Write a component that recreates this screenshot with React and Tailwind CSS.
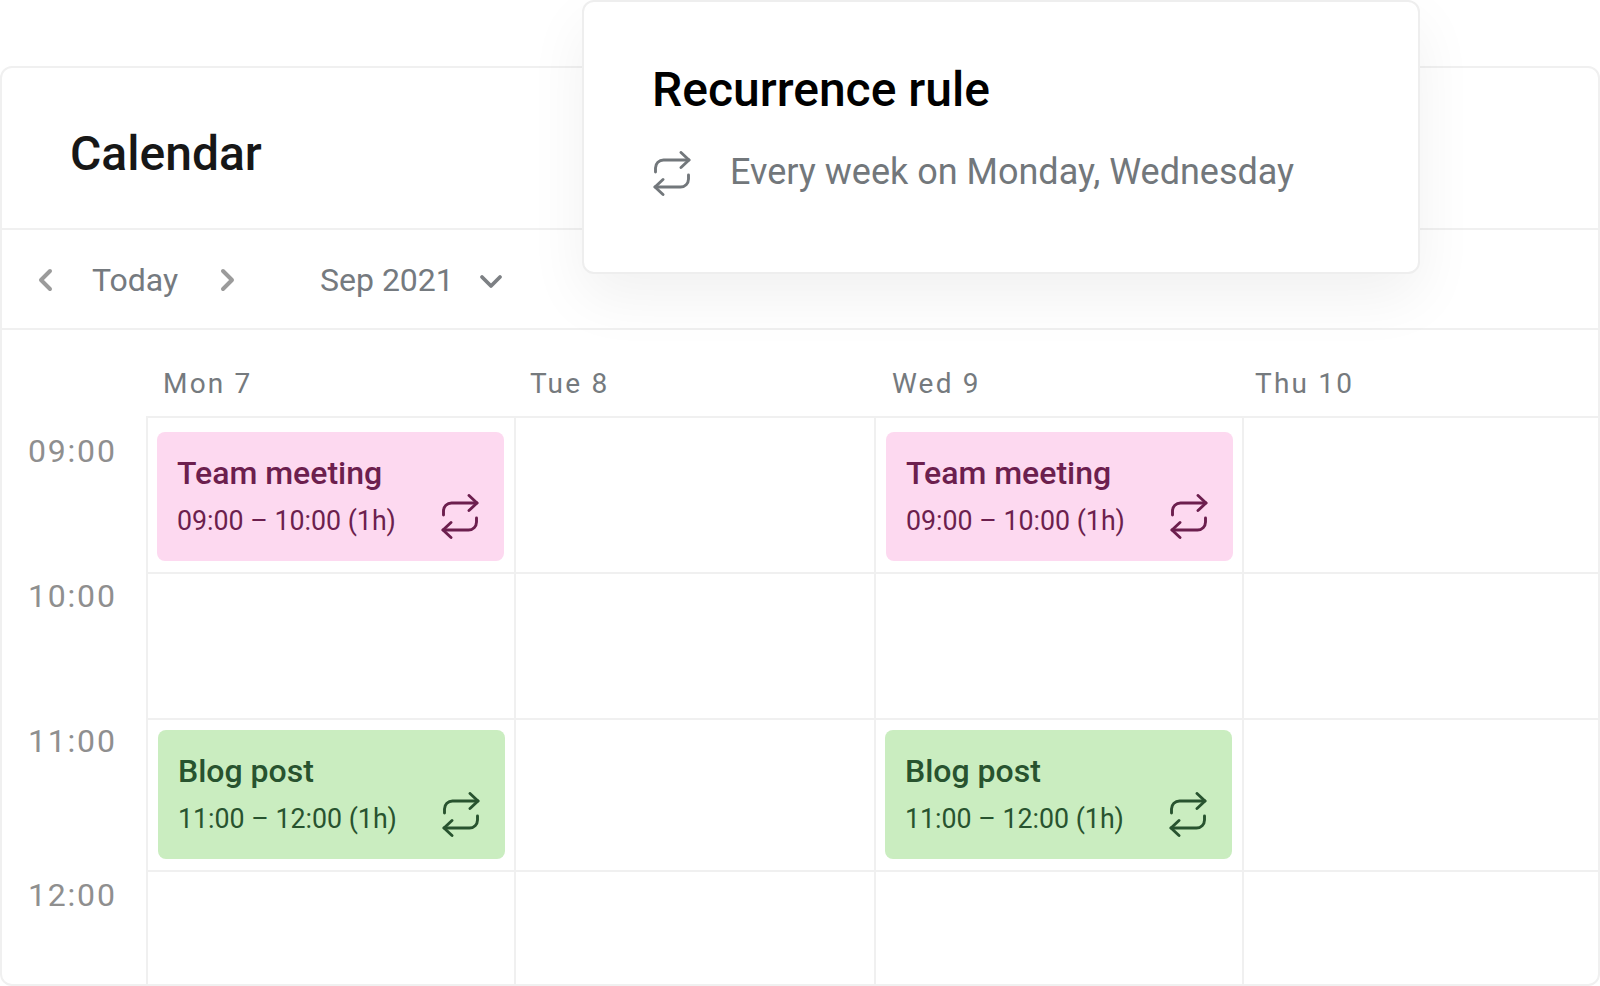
const ROBOTO = "font-['Roboto',sans-serif]";

function RepeatIcon({ className }) {
  return (
    <svg viewBox="0 0 38 46" width="38" height="46" fill="none" stroke="currentColor" strokeWidth="2.9" strokeLinecap="round" strokeLinejoin="round" className={className}>
      <path d="M28 1.5l8 7.5-8 7.5" />
      <path d="M2.5 21v-4a8 8 0 0 1 8-8H36" />
      <path d="M10 28.500l-8 7.500 8 7.500" />
      <path d="M35.500 24v4a8 8 0 0 1-8 8H2" />
    </svg>
  );
}

function EventCard({ title, time, tone, offset }) {
  const tones = {
    pink: "bg-[#fdd9f0] text-[#6c1f4e]",
    green: "bg-[#caedc0] text-[#28532f]",
  };
  return (
    <div className={`flex h-[129px] w-[347px] items-end justify-between rounded-[8px] pb-[21px] pl-[20px] pr-[25px] ${tones[tone]} ${offset}`}>
      <div className="mb-[2px] flex flex-col">
        <span className="text-[32px] leading-[40px] font-medium">{title}</span>
        <span className="mt-[11px] text-[26.75px] leading-[34px]">{time}</span>
      </div>
      <RepeatIcon />
    </div>
  );
}

function TimeCell({ label, pad }) {
  return (
    <div className={`pl-[26px] text-[32px] leading-[36px] tracking-[1.8px] text-[#8f8f8f] ${pad}`}>{label}</div>
  );
}

const cell = "border-l-2 border-t-2 border-[#f0f0f0]";

export default function App() {
  return (
    <div className={`relative h-[986px] w-[1600px] overflow-hidden bg-white pt-[66px] ${ROBOTO}`}>
      <div className="flex h-[920px] flex-col rounded-[12px] border-2 border-[#f0f0f0] bg-white">
        <div className="flex h-[162px] shrink-0 items-center border-b-2 border-[#f0f0f0] pl-[68px] pt-[12px]">
          <h1 className="text-[48px] leading-none font-medium text-[#171717]">Calendar</h1>
        </div>

        <div className="flex h-[100px] shrink-0 items-center border-b-2 border-[#f0f0f0] pt-[2px] text-[32px] text-[#757a7f]">
          <svg viewBox="0 0 16 24" width="16" height="24" fill="none" stroke="#9b9b9b" strokeWidth="4" strokeLinecap="round" strokeLinejoin="round" className="ml-[35px]">
            <path d="M13 3L4 12l9 9" />
          </svg>
          <span className="ml-[39px] w-[88px] leading-none">Today</span>
          <svg viewBox="0 0 16 24" width="16" height="24" fill="none" stroke="#9b9b9b" strokeWidth="4" strokeLinecap="round" strokeLinejoin="round" className="ml-[40px]">
            <path d="M3 3l9 9-9 9" />
          </svg>
          <span className="ml-[84px] w-[133px] leading-none whitespace-nowrap">Sep 2021</span>
          <svg viewBox="0 0 24 15" width="24" height="15" fill="none" stroke="#7d8084" strokeWidth="3.8" strokeLinecap="round" strokeLinejoin="round" className="ml-[26px] mt-[2px]">
            <path d="M3 3l9 9 9-9" />
          </svg>
        </div>

        <div className="grid min-h-0 flex-1 grid-cols-[144px_368px_360px_368px_1fr] grid-rows-[86px_156px_146px_152px_1fr]">
          <div />
          <div className="pl-[17px] pt-[35px] text-[28px] leading-[38px] tracking-[2.2px] text-[#757a7e]">Mon 7</div>
          <div className="pl-[16px] pt-[35px] text-[28px] leading-[38px] tracking-[2.2px] text-[#757a7e]">Tue 8</div>
          <div className="pl-[18px] pt-[35px] text-[28px] leading-[38px] tracking-[2.2px] text-[#757a7e]">Wed 9</div>
          <div className="pl-[13px] pt-[35px] text-[28px] leading-[38px] tracking-[2.2px] text-[#757a7e]">Thu 10</div>

          <TimeCell label="09:00" pad="pt-[17px]" />
          <div className={cell}><EventCard title="Team meeting" time="09:00 – 10:00 (1h)" tone="pink" offset="ml-[9px] mt-[14px]" /></div>
          <div className={cell} />
          <div className={cell}><EventCard title="Team meeting" time="09:00 – 10:00 (1h)" tone="pink" offset="ml-[10px] mt-[14px]" /></div>
          <div className={cell} />

          <TimeCell label="10:00" pad="pt-[6px]" />
          <div className={cell} />
          <div className={cell} />
          <div className={cell} />
          <div className={cell} />

          <TimeCell label="11:00" pad="pt-[5px]" />
          <div className={cell}><EventCard title="Blog post" time="11:00 – 12:00 (1h)" tone="green" offset="ml-[10px] mt-[10px]" /></div>
          <div className={cell} />
          <div className={cell}><EventCard title="Blog post" time="11:00 – 12:00 (1h)" tone="green" offset="ml-[9px] mt-[10px]" /></div>
          <div className={cell} />

          <TimeCell label="12:00" pad="pt-[7px]" />
          <div className={cell} />
          <div className={cell} />
          <div className={cell} />
          <div className={cell} />
        </div>
      </div>

      <div className="absolute left-[582px] top-0 flex h-[274px] w-[838px] flex-col rounded-[12px] border-2 border-[#eeeeee] bg-white pl-[69px] pt-[61px] shadow-[0_24px_60px_rgba(0,0,0,0.06)]">
        <h2 className="-ml-px text-[48px] leading-[54px] font-medium text-black">Recurrence rule</h2>
        <div className="mt-[32px] flex items-center text-[#72777b]">
          <RepeatIcon className="mt-[2px]" />
          <span className="ml-[39px] -translate-y-px text-[36px] leading-[44px]">Every week on Monday, Wednesday</span>
        </div>
      </div>
    </div>
  );
}
